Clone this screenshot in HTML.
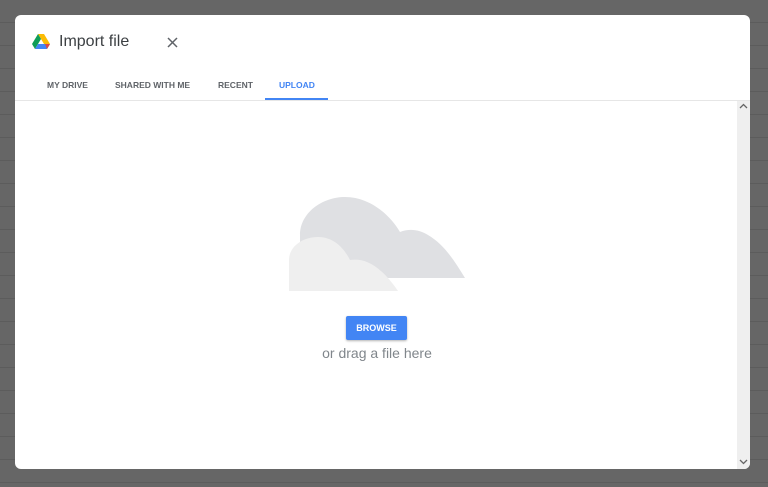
<!DOCTYPE html>
<html><head><style>
html,body{margin:0;padding:0;width:768px;height:487px;overflow:hidden;background:#666;font-family:"Liberation Sans",Arial,sans-serif;position:relative}
.grid{position:absolute;inset:0;background-image:repeating-linear-gradient(to bottom,transparent 0 22px,#5c5c5c 22px 23px);}
.dlg{position:absolute;left:15px;top:15px;width:735px;height:454px;background:#fff;border-radius:6px;overflow:hidden}
.title{position:absolute;left:44px;top:18px;font-size:16px;color:#3c4043}
.tab{position:absolute;top:65px;font-size:8.5px;font-weight:bold;color:#5f6368}
.sep{position:absolute;left:0;top:85px;width:735px;height:1px;background:#e6e6e6}
.ul{position:absolute;left:250px;top:83px;width:63px;height:2px;background:#4285f4}
.sb{position:absolute;left:722px;top:86px;width:13px;height:368px;background:#efefef}
.btn{position:absolute;left:331px;top:301px;width:61px;height:24px;background:#4285f4;color:#fff;font-size:9px;font-weight:bold;text-align:center;line-height:24px;border-radius:2px;box-shadow:0 1px 2px rgba(0,0,0,.3)}
.drag{position:absolute;left:262px;top:330px;width:200px;text-align:center;font-size:14px;color:#80868b}
</style></head><body>
<div class="grid"></div>
<div class="dlg">
<svg style="position:absolute;left:17px;top:19px" width="18" height="16" viewBox="0 0 18 16">
<polygon points="6,0 12,0 18,10 15,15" fill="#fbbc04"/>
<polygon points="6,0 9,5 3,15 0,10" fill="#0f9d58"/>
<polygon points="6,10 12,10 18,10 15,15 3,15" fill="#4285f4"/>
<polygon points="15,15 18,10 13,10" fill="#ea4335" opacity=".9"/>
</svg>
<div class="title">Import file</div>
<svg style="position:absolute;left:152px;top:22px" width="11" height="11" viewBox="0 0 11 11"><path d="M1 1L10 10M10 1L1 10" stroke="#5f6368" stroke-width="1.5"/></svg>
<div class="tab" style="left:32px">MY DRIVE</div>
<div class="tab" style="left:100px">SHARED WITH ME</div>
<div class="tab" style="left:203px">RECENT</div>
<div class="tab" style="left:264px;color:#4285f4">UPLOAD</div>
<div class="sep"></div><div class="ul"></div>
<div class="sb"></div>
<svg style="position:absolute;left:724px;top:88px" width="9" height="6"><path d="M1 5L4.5 1.5L8 5" stroke="#666" stroke-width="1.3" fill="none"/></svg>
<svg style="position:absolute;left:724px;top:444px" width="9" height="6"><path d="M1 1L4.5 4.5L8 1" stroke="#666" stroke-width="1.3" fill="none"/></svg>
<svg style="position:absolute;left:0;top:0" width="735" height="454" viewBox="15 15 735 454">
<path d="M300,278 L300,235 C300,213 322,197 345,197 C370,197 390,215 400,232 C410,228 420,230 428,235 C445,245 455,262 465,278 Z" fill="#dfe0e3"/>
<path d="M289,291 L289,260 C289,247 302,237 318,237 C335,237 345,250 350,260 C365,258 380,265 398,291 Z" fill="#efefef"/>
</svg>
<div class="btn">BROWSE</div>
<div class="drag">or drag a file here</div>
</div>
</body></html>
